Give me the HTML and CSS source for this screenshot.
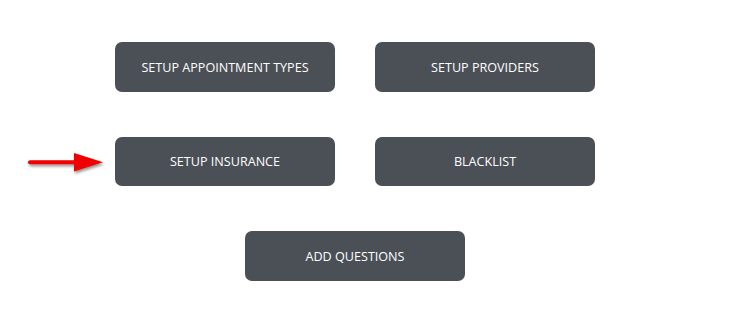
FILE: index.html
```html
<!DOCTYPE html>
<html>
<head>
<meta charset="utf-8">
<link rel="stylesheet" href="styles.css">
</head>
<body>
<div class="page">
  <div class="row">
    <button class="btn">SETUP APPOINTMENT TYPES</button>
    <button class="btn">SETUP PROVIDERS</button>
  </div>
  <div class="row row-mid">
    <div class="btn-wrap">
      <svg class="arrow" width="84" height="28" viewBox="0 0 84 28">
        <defs>
          <filter id="sh" x="-20%" y="-50%" width="140%" height="200%">
            <feGaussianBlur in="SourceAlpha" stdDeviation="1.5"/>
            <feOffset dx="1" dy="2"/>
            <feComponentTransfer><feFuncA type="linear" slope="0.45"/></feComponentTransfer>
            <feMerge><feMergeNode/><feMergeNode in="SourceGraphic"/></feMerge>
          </filter>
        </defs>
        <g filter="url(#sh)">
          <rect x="2" y="10.2" width="50" height="4" rx="2" fill="#f00000"/>
          <polygon points="48,3 77,12.2 48,21.5" fill="#f00000"/>
        </g>
      </svg>
      <button class="btn">SETUP INSURANCE</button>
    </div>
    <button class="btn">BLACKLIST</button>
  </div>
  <div class="row">
    <button class="btn">ADD QUESTIONS</button>
  </div>
</div>
</body>
</html>
```
FILE: styles.css
```css
html, body {
  margin: 0;
  padding: 0;
  background: #ffffff;
}
.page {
  width: 710px;
  padding-top: 42px;
  display: flex;
  flex-direction: column;
  align-items: center;
  gap: 45px;
}
.row {
  display: flex;
  gap: 40px;
  justify-content: center;
}
.row-mid .btn {
  height: 49px;
}
.btn-wrap {
  position: relative;
  display: flex;
}
.arrow {
  position: absolute;
  left: -89px;
  top: 13px;
}
.btn {
  width: 220px;
  height: 50px;
  margin: 0;
  border: none;
  border-radius: 7px;
  background: #4b4f56;
  color: #ffffff;
  font-family: "Open Sans", "DejaVu Sans", sans-serif;
  font-size: 12.6px;
  letter-spacing: 0;
  padding: 0;
  cursor: pointer;
}
```
